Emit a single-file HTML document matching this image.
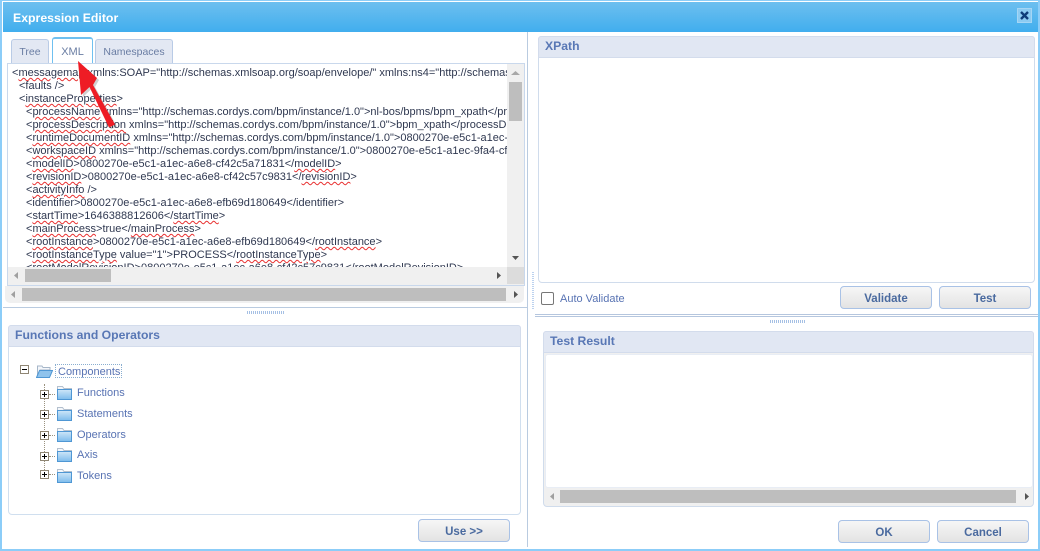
<!DOCTYPE html>
<html><head><meta charset="utf-8"><style>
html,body{margin:0;padding:0;width:1040px;height:551px;overflow:hidden;background:#fff}
body{position:relative;font-family:"Liberation Sans",sans-serif;font-size:11.5px;color:#2b3a55}
.a{position:absolute;box-sizing:border-box}
.t{position:absolute;white-space:nowrap}
.l{position:absolute;white-space:nowrap;left:0;margin-top:1px;color:#2f3850;font-size:11px;line-height:13px}
u{text-decoration:underline wavy #e83030 1px;text-underline-offset:1px}
.hd{position:absolute;box-sizing:border-box;background:#e1e7f3;border:1px solid #d3dcec;border-radius:3px 3px 0 0;color:#5877b5;font-weight:bold;font-size:12.2px;padding:3px 6px}
.btn{position:absolute;box-sizing:border-box;width:92px;height:23px;border:1px solid #a9c2e6;border-radius:4px;background:linear-gradient(#f6f6f6,#e3e3e3);color:#4a6a9f;font-weight:bold;font-size:11.5px;text-align:center;line-height:24px}
.tab{position:absolute;box-sizing:border-box;background:#e3e8f3;border:1px solid #b9cbe6;border-bottom:0;border-radius:3px 3px 0 0;color:#6a7da3;text-align:center;font-size:10.5px;line-height:25px}
.tn{position:absolute;left:77px;margin-top:1px;color:#5873b3;font-size:11px;line-height:13px}
.pm{position:absolute;box-sizing:border-box;width:9px;height:9px;border:1px solid #8f8674;background:#fff}
.pm:before{content:"";position:absolute;left:1px;top:3px;width:5px;height:1px;background:#000}
.pm.p:after{content:"";position:absolute;left:3px;top:1px;width:1px;height:5px;background:#000}
.dv{position:absolute;border-left:1px dotted #9a927f}
.dh{position:absolute;border-top:1px dotted #9a927f;width:6px}
</style></head><body>

<div class="a" style="left:0;top:0;width:1040px;height:551px;border:2px solid #8ccdf8;border-top:1px solid #8ccdf8"></div>
<div class="a" style="left:3px;top:2px;width:1035px;height:30px;background:linear-gradient(#6dbfef,#41aeee)"></div>
<div class="t" style="left:13px;top:11px;color:#fff;font-weight:bold;font-size:12.3px">Expression Editor</div>
<div class="a" style="left:1017px;top:8px;width:15px;height:15px;background:#8ccbf2;border:1px solid #a5d6f5">
<svg width="13" height="13" style="position:absolute;left:0;top:0"><path d="M3 3L10 10M10 3L3 10" stroke="#0f3d7a" stroke-width="2.4"/></svg></div>

<!-- tabs -->
<div class="tab" style="left:11px;top:39px;width:38px;height:24px">Tree</div>
<div class="tab" style="left:52px;top:37px;width:41px;height:26px;background:#fff;border:1px solid #6fc0f0;border-top:2px solid #6fc0f0;border-bottom:0;line-height:26px;font-size:11px">XML</div>
<div class="tab" style="left:95px;top:39px;width:78px;height:24px">Namespaces</div>

<!-- xml editor -->
<div class="a" style="left:7px;top:63px;width:518px;height:223px;border:1px solid #c9d8ec;background:#f0f0f0"></div>
<div class="a" style="left:8px;top:64px;width:499px;height:203px;background:#fff;overflow:hidden">
<div class="l" style="left:4px;top:2px">&lt;<u>messagemap</u> xmlns:SOAP="http://schemas.xmlsoap.org/soap/envelope/" xmlns:ns4="http://schemas.cordys.com/bpm/instance/1.0"</div>
<div class="l" style="left:11px;top:15px">&lt;faults /&gt;</div>
<div class="l" style="left:11px;top:28px">&lt;<u>instanceProperties</u>&gt;</div>
<div class="l" style="left:18px;top:41px">&lt;<u>processName</u> xmlns="http://schemas.cordys.com/bpm/instance/1.0"&gt;nl-bos/bpms/bpm_xpath&lt;/processName&gt;</div>
<div class="l" style="left:18px;top:54px">&lt;<u>processDescription</u> xmlns="http://schemas.cordys.com/bpm/instance/1.0"&gt;bpm_xpath&lt;/processDescription&gt;</div>
<div class="l" style="left:18px;top:67px">&lt;<u>runtimeDocumentID</u> xmlns="http://schemas.cordys.com/bpm/instance/1.0"&gt;0800270e-e5c1-a1ec-a6e8-cf42c5a71831</div>
<div class="l" style="left:18px;top:80px">&lt;<u>workspaceID</u> xmlns="http://schemas.cordys.com/bpm/instance/1.0"&gt;0800270e-e5c1-a1ec-9fa4-cf42c5a71831</div>
<div class="l" style="left:18px;top:93px">&lt;<u>modelID</u>&gt;0800270e-e5c1-a1ec-a6e8-cf42c5a71831&lt;/<u>modelID</u>&gt;</div>
<div class="l" style="left:18px;top:106px">&lt;<u>revisionID</u>&gt;0800270e-e5c1-a1ec-a6e8-cf42c57c9831&lt;/<u>revisionID</u>&gt;</div>
<div class="l" style="left:18px;top:119px">&lt;<u>activityInfo</u> /&gt;</div>
<div class="l" style="left:18px;top:132px">&lt;identifier&gt;0800270e-e5c1-a1ec-a6e8-efb69d180649&lt;/identifier&gt;</div>
<div class="l" style="left:18px;top:145px">&lt;<u>startTime</u>&gt;1646388812606&lt;/<u>startTime</u>&gt;</div>
<div class="l" style="left:18px;top:158px">&lt;<u>mainProcess</u>&gt;true&lt;/<u>mainProcess</u>&gt;</div>
<div class="l" style="left:18px;top:171px">&lt;<u>rootInstance</u>&gt;0800270e-e5c1-a1ec-a6e8-efb69d180649&lt;/<u>rootInstance</u>&gt;</div>
<div class="l" style="left:18px;top:184px">&lt;<u>rootInstanceType</u> value="1"&gt;PROCESS&lt;/<u>rootInstanceType</u>&gt;</div>
<div class="l" style="left:18px;top:197px">&lt;<u>rootModelRevisionID</u>&gt;0800270e-e5c1-a1ec-a6e8-cf42c57c9831&lt;/<u>rootModelRevisionID</u>&gt;</div>
</div>
<!-- v scrollbar -->
<div class="a" style="left:507px;top:64px;width:17px;height:203px;background:#f0f0f0"></div>
<div class="a" style="left:509px;top:82px;width:13px;height:39px;background:#bebebe"></div>
<svg class="a" style="left:507px;top:64px" width="17" height="203"><path d="M4 11L8.500 7L13 11Z" fill="#a8a8a8"/><path d="M5 192L8.500 196L12 192Z" fill="#555"/></svg>
<!-- inner h scrollbar -->
<div class="a" style="left:8px;top:267px;width:499px;height:17px;background:#f0f0f0"></div>
<div class="a" style="left:507px;top:267px;width:17px;height:17px;background:#dcdcdc"></div>
<div class="a" style="left:25px;top:269px;width:86px;height:13px;background:#bebebe"></div>
<svg class="a" style="left:8px;top:267px" width="499" height="17"><path d="M10 5L6 8.500L10 12Z" fill="#a0a0a0"/><path d="M489 5L493 8.500L489 12Z" fill="#555"/></svg>
<!-- outer h scrollbar -->
<div class="a" style="left:5px;top:286px;width:519px;height:17px;background:#f0f0f0;border-radius:0 0 5px 5px"></div>
<div class="a" style="left:22px;top:288px;width:484px;height:13px;background:#bebebe"></div>
<svg class="a" style="left:6px;top:285px" width="518" height="18"><path d="M9 6L5 9.500L9 13Z" fill="#a0a0a0"/><path d="M508 6L512 9.500L508 13Z" fill="#555"/></svg>

<div class="a" style="left:3px;top:307px;width:524px;height:1px;background:#b9cbe0"></div>
<div class="a" style="left:247px;top:311px;width:37px;height:3px;background:repeating-linear-gradient(90deg,#8fb0dd 0 1px,#fff 1px 2px);opacity:.8"></div>

<!-- functions panel -->
<div class="a" style="left:8px;top:325px;width:513px;height:190px;border:1px solid #d0dfef;border-radius:4px"></div>
<div class="hd" style="left:8px;top:325px;width:513px;height:22px;padding:2px 6px">Functions and Operators</div>

<!-- tree -->
<div class="pm" style="left:20px;top:365px;width:9px;height:9px"></div>
<svg class="a" style="left:36px;top:364px" width="17" height="15"><path d="M1.500 13V2H6L7 3.500H14V6H4L1.500 13Z" fill="#f4f7fb" stroke="#a6b6c8"/><path d="M0.500 13.500L3.500 6.500H16.500L13.500 13.500Z" fill="#8fc3ec" stroke="#4f97d4"/></svg>
<div class="a" style="left:55px;top:364px;width:67px;height:14px;border:1px dotted #8aaed0"></div>
<div class="t" style="left:58px;top:366px;color:#5873b3;font-size:11px;line-height:13px">Components</div>

<div class="dv" style="left:44px;top:384px;height:90px"></div>
<div class="pm p" style="left:40px;top:390px"></div><div class="dh" style="left:49px;top:394px"></div>
<div class="pm p" style="left:40px;top:410px"></div><div class="dh" style="left:49px;top:414px"></div>
<div class="pm p" style="left:40px;top:431px"></div><div class="dh" style="left:49px;top:435px"></div>
<div class="pm p" style="left:40px;top:452px"></div><div class="dh" style="left:49px;top:456px"></div>
<div class="pm p" style="left:40px;top:470px"></div><div class="dh" style="left:49px;top:474px"></div>

<svg width="0" height="0" style="position:absolute"><defs><linearGradient id="fg" x1="0" y1="0" x2="0" y2="1"><stop offset="0" stop-color="#cfe6f8"/><stop offset="1" stop-color="#7dbcec"/></linearGradient></defs></svg>
<svg class="a" style="left:56px;top:386px" width="17" height="14"><path d="M1.500 12V.500H6.500L8 2.500H15.500V12Z" fill="#f4f7fb" stroke="#b4c0ce"/><rect x="1.500" y="3.500" width="14" height="10" fill="url(#fg)" stroke="#4f97d4"/></svg>
<svg class="a" style="left:56px;top:407px" width="17" height="14"><path d="M1.500 12V.500H6.500L8 2.500H15.500V12Z" fill="#f4f7fb" stroke="#b4c0ce"/><rect x="1.500" y="3.500" width="14" height="10" fill="url(#fg)" stroke="#4f97d4"/></svg>
<svg class="a" style="left:56px;top:428px" width="17" height="14"><path d="M1.500 12V.500H6.500L8 2.500H15.500V12Z" fill="#f4f7fb" stroke="#b4c0ce"/><rect x="1.500" y="3.500" width="14" height="10" fill="url(#fg)" stroke="#4f97d4"/></svg>
<svg class="a" style="left:56px;top:448px" width="17" height="14"><path d="M1.500 12V.500H6.500L8 2.500H15.500V12Z" fill="#f4f7fb" stroke="#b4c0ce"/><rect x="1.500" y="3.500" width="14" height="10" fill="url(#fg)" stroke="#4f97d4"/></svg>
<svg class="a" style="left:56px;top:469px" width="17" height="14"><path d="M1.500 12V.500H6.500L8 2.500H15.500V12Z" fill="#f4f7fb" stroke="#b4c0ce"/><rect x="1.500" y="3.500" width="14" height="10" fill="url(#fg)" stroke="#4f97d4"/></svg>

<div class="tn" style="top:386px">Functions</div>
<div class="tn" style="top:407px">Statements</div>
<div class="tn" style="top:428px">Operators</div>
<div class="tn" style="top:448px">Axis</div>
<div class="tn" style="top:469px">Tokens</div>

<div class="btn" style="left:418px;top:519px">Use &gt;&gt;</div>

<!-- divider -->
<div class="a" style="left:527px;top:32px;width:1px;height:515px;background:#b9cbe0"></div>
<div class="a" style="left:532px;top:272px;width:2px;height:37px;background:repeating-linear-gradient(#bcd2ef 0 1px,#fff 1px 2px)"></div>

<!-- xpath -->
<div class="a" style="left:538px;top:36px;width:497px;height:247px;border:1px solid #d0dcec;border-radius:4px"></div>
<div class="hd" style="left:538px;top:36px;width:497px;height:22px;padding:2px 6px">XPath</div>

<div class="a" style="left:541px;top:292px;width:13px;height:13px;border:1px solid #777;border-radius:2px;background:#fff"></div>
<div class="t" style="left:560px;top:293px;color:#5873b3;font-size:11px;line-height:13px">Auto Validate</div>
<div class="btn" style="left:840px;top:286px">Validate</div>
<div class="btn" style="left:939px;top:286px">Test</div>

<div class="a" style="left:535px;top:314px;width:503px;height:3px;border-top:1px solid #b5c6de;border-bottom:1px solid #b5c6de"></div>
<div class="a" style="left:770px;top:320px;width:35px;height:3px;background:repeating-linear-gradient(90deg,#8fb0dd 0 1px,#fff 1px 2px);opacity:.8"></div>

<!-- test result -->
<div class="a" style="left:543px;top:331px;width:491px;height:176px;border:1px solid #d0dcec;border-radius:4px;background:#f0f0f0"></div>
<div class="hd" style="left:543px;top:331px;width:491px;height:22px;padding:2px 6px">Test Result</div>
<div class="a" style="left:545px;top:354px;width:488px;height:134px;background:#fff;border:1px solid #e8edf5;border-radius:3px"></div>
<div class="a" style="left:560px;top:490px;width:456px;height:13px;background:#bebebe"></div>
<svg class="a" style="left:544px;top:488px" width="489" height="17"><path d="M10 5L6 8.500L10 12Z" fill="#a0a0a0"/><path d="M481 5L485 8.500L481 12Z" fill="#555"/></svg>

<div class="btn" style="left:838px;top:520px">OK</div>
<div class="btn" style="left:937px;top:520px">Cancel</div>

<!-- annotation arrow -->
<svg class="a" style="left:70px;top:55px" width="55" height="85"><path d="M10 8L29 25L25 32L47 71.500L41 74.500L21.500 34L13 42Z" fill="#000" opacity=".18"/><path d="M8 6L27 23L23 30L45 69.500L39 72.500L19.500 32L11 40Z" fill="#ee1c25"/></svg>
</body></html>
